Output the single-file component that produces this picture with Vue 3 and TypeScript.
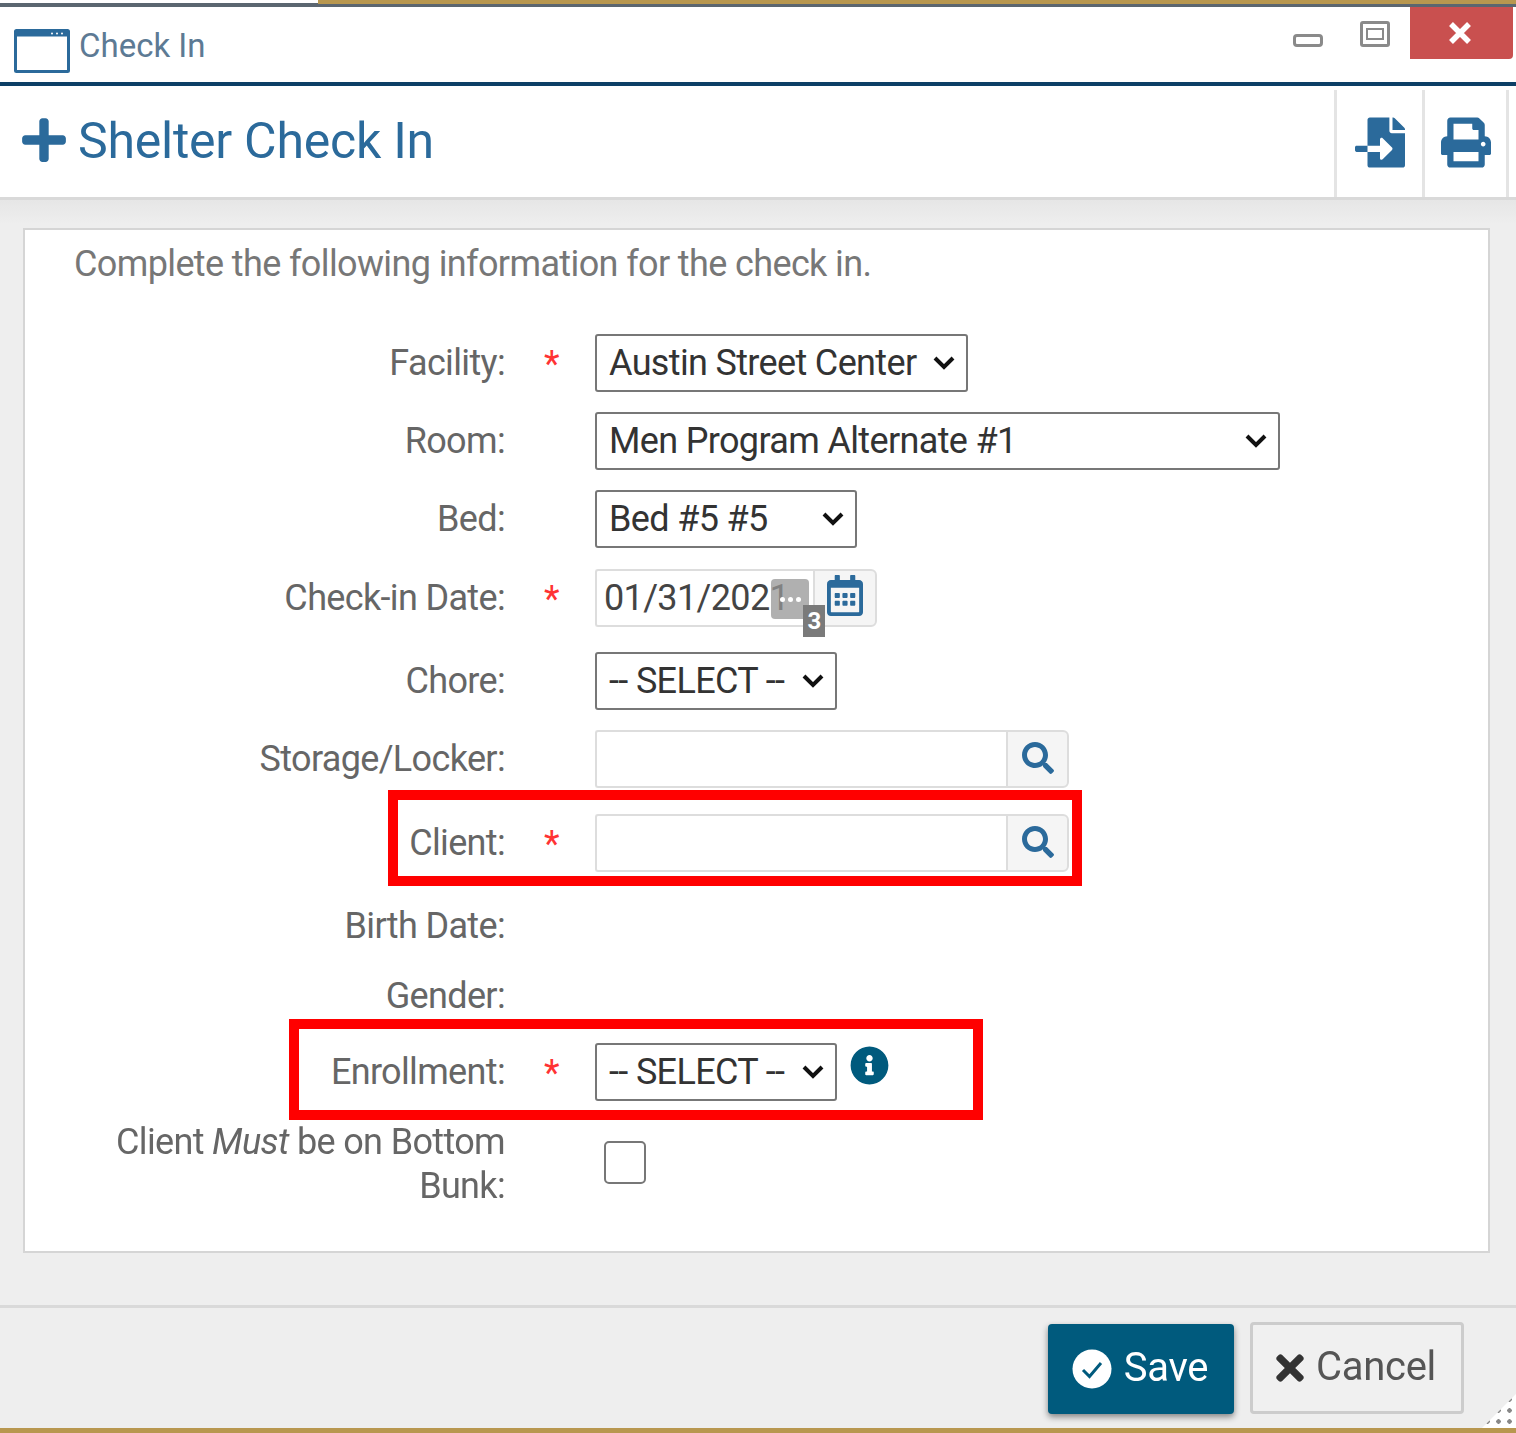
<template>
  <div class="page">
    <div class="window">
      <div class="top-strip"><span class="strip-light"></span><span class="strip-tan"></span></div>

      <div class="titlebar">
        <svg class="win-icon" viewBox="0 0 56 44">
          <rect x="1.5" y="1.5" width="53" height="41" rx="1" fill="#fff" stroke="#2b6a9b" stroke-width="3" />
          <rect x="1.5" y="1.5" width="53" height="6" fill="#2b6a9b" />
          <circle cx="38" cy="4.5" r="1" fill="#fff" />
          <circle cx="43" cy="4.5" r="1" fill="#fff" />
          <circle cx="48" cy="4.5" r="1" fill="#fff" />
        </svg>
        <span class="win-title">Check In</span>
        <span class="win-min"></span>
        <span class="win-max"><i></i></span>
        <span class="win-close">
          <svg viewBox="0 0 24 22"><path d="M3 2l18 18M21 2L3 20" fill="none" stroke="#fff" stroke-width="5.5" /></svg>
        </span>
      </div>

      <div class="header">
        <svg class="plus" viewBox="0 0 448 512"><path :d="icons.plus" /></svg>
        <h1>Shelter Check In</h1>
        <button class="tool"><svg viewBox="0 0 512 512"><path :d="icons.fileImport" /></svg></button>
        <button class="tool"><svg viewBox="0 0 512 512"><path :d="icons.print" /></svg></button>
      </div>

      <div class="body">
        <div class="panel">
          <p class="intro">Complete the following information for the check in.</p>
          <div class="form">
            <div v-for="f in fields" :key="f.label" class="row">
              <label class="label">
                <template v-if="f.key === 'bunk'">Client <em>Must</em> be on Bottom Bunk:</template>
                <template v-else>{{ f.label }}:</template>
              </label>
              <span class="star">{{ f.required ? '*' : '' }}</span>

              <div v-if="f.kind === 'select'" class="select" :style="{ width: f.width + 'px' }">
                <span>{{ f.value }}</span>
                <svg viewBox="0 0 24 16"><path d="M3 4l9 9 9-9" fill="none" stroke="#111" stroke-width="4" /></svg>
              </div>

              <div v-else-if="f.kind === 'date'" class="group date">
                <div class="input">{{ f.value }}</div>
                <div class="addon">
                  <svg class="cal" viewBox="0 0 448 512"><path :d="icons.calendar" /></svg>
                </div>
                <span class="pm-dots"><i></i><i></i><i></i></span>
                <span class="pm-count">3</span>
              </div>

              <div v-else-if="f.kind === 'lookup'" class="group lookup">
                <div class="input"></div>
                <div class="addon">
                  <svg class="search" viewBox="0 0 512 512"><path :d="icons.search" /></svg>
                </div>
              </div>

              <span v-else-if="f.kind === 'check'" class="checkbox"></span>

              <svg v-if="f.key === 'enrollment'" class="info" viewBox="0 0 512 512"><path :d="icons.info" /></svg>
            </div>
          </div>
        </div>
      </div>

      <div class="footer">
        <button class="btn save">
          <svg viewBox="0 0 40 40">
            <circle cx="20" cy="20" r="19.5" fill="#fff" />
            <path d="M11 21l6.5 6.5L29 14" fill="none" stroke="#005a7d" stroke-width="3" />
          </svg>
          Save
        </button>
        <button class="btn cancel">
          <svg viewBox="0 0 352 512"><path :d="icons.times" /></svg>
          Cancel
        </button>
        <span class="grip"></span>
      </div>

      <div class="bottom-strip"></div>
    </div>

    <div class="callout client-box"></div>
    <div class="callout enroll-box"></div>
  </div>
</template>

<script setup lang="ts">
type Kind = 'select' | 'date' | 'lookup' | 'text' | 'check';

interface Field {
  key: string;
  label: string;
  kind: Kind;
  required?: boolean;
  value?: string;
  width?: number;
}

const fields: Field[] = [
  { key: 'facility', label: 'Facility', kind: 'select', required: true, value: 'Austin Street Center', width: 373 },
  { key: 'room', label: 'Room', kind: 'select', value: 'Men Program Alternate #1', width: 685 },
  { key: 'bed', label: 'Bed', kind: 'select', value: 'Bed #5 #5', width: 262 },
  { key: 'date', label: 'Check-in Date', kind: 'date', required: true, value: '01/31/2021' },
  { key: 'chore', label: 'Chore', kind: 'select', value: '-- SELECT --', width: 242 },
  { key: 'locker', label: 'Storage/Locker', kind: 'lookup' },
  { key: 'client', label: 'Client', kind: 'lookup', required: true },
  { key: 'birth', label: 'Birth Date', kind: 'text' },
  { key: 'gender', label: 'Gender', kind: 'text' },
  { key: 'enrollment', label: 'Enrollment', kind: 'select', required: true, value: '-- SELECT --', width: 242 },
  { key: 'bunk', label: 'Client Must be on Bottom Bunk', kind: 'check' },
];

// font awesome 5 shapes
const icons = {
  plus: 'M416 208H272V64c0-17.67-14.33-32-32-32h-32c-17.67 0-32 14.33-32 32v144H32c-17.67 0-32 14.33-32 32v32c0 17.67 14.33 32 32 32h144v144c0 17.67 14.33 32 32 32h32c17.67 0 32-14.33 32-32V304h144c17.67 0 32-14.33 32-32v-32c0-17.67-14.33-32-32-32z',
  fileImport: 'M16 288c-8.8 0-16 7.2-16 16v32c0 8.8 7.2 16 16 16h112v-64zm489-183L407.1 7c-4.5-4.5-10.6-7-17-7H384v128h128v-6.1c0-6.3-2.5-12.4-7-16.9zm-153 31V0H152c-13.3 0-24 10.7-24 24v264h128v-65.2c0-14.3 17.3-21.4 27.4-11.3L379 308c6.6 6.7 6.6 17.4 0 24l-95.7 96.4c-10.1 10.1-27.4 3-27.4-11.3V352H128v136c0 13.3 10.7 24 24 24h336c13.3 0 24-10.7 24-24V160H376c-13.2 0-24-10.8-24-24z',
  print: 'M448 192V77.25c0-8.49-3.37-16.62-9.37-22.63L393.37 9.37c-6-6-14.14-9.37-22.63-9.37H96C78.33 0 64 14.33 64 32v160c-35.35 0-64 28.65-64 64v112c0 8.84 7.16 16 16 16h48v96c0 17.67 14.33 32 32 32h320c17.67 0 32-14.33 32-32v-96h48c8.84 0 16-7.16 16-16V256c0-35.35-28.65-64-64-64zm-64 256H128v-96h256v96zm0-224H128V64h192v48c0 8.84 7.16 16 16 16h48v96zm48 72c-13.25 0-24-10.75-24-24 0-13.26 10.75-24 24-24s24 10.74 24 24c0 13.25-10.75 24-24 24z',
  calendar: 'M148 288h-40c-6.6 0-12-5.4-12-12v-40c0-6.6 5.4-12 12-12h40c6.6 0 12 5.4 12 12v40c0 6.6-5.4 12-12 12zm108-12v-40c0-6.6-5.4-12-12-12h-40c-6.6 0-12 5.4-12 12v40c0 6.6 5.4 12 12 12h40c6.6 0 12-5.4 12-12zm96 0v-40c0-6.6-5.4-12-12-12h-40c-6.6 0-12 5.4-12 12v40c0 6.6 5.4 12 12 12h40c6.6 0 12-5.4 12-12zm-96 96v-40c0-6.6-5.4-12-12-12h-40c-6.6 0-12 5.4-12 12v40c0 6.6 5.4 12 12 12h40c6.6 0 12-5.4 12-12zm-96 0v-40c0-6.6-5.4-12-12-12h-40c-6.6 0-12 5.4-12 12v40c0 6.6 5.4 12 12 12h40c6.6 0 12-5.4 12-12zm192 0v-40c0-6.6-5.4-12-12-12h-40c-6.6 0-12 5.4-12 12v40c0 6.6 5.4 12 12 12h40c6.6 0 12-5.4 12-12zm96-260v352c0 26.5-21.5 48-48 48H48c-26.5 0-48-21.5-48-48V112c0-26.5 21.5-48 48-48h48V12c0-6.6 5.4-12 12-12h40c6.6 0 12 5.4 12 12v52h128V12c0-6.6 5.4-12 12-12h40c6.6 0 12 5.4 12 12v52h48c26.5 0 48 21.5 48 48zm-48 346V160H48v298c0 3.3 2.7 6 6 6h340c3.3 0 6-2.7 6-6z',
  search: 'M505 442.7L405.3 343c-4.5-4.5-10.6-7-17-7H372c27.6-35.3 44-79.7 44-128C416 93.1 322.9 0 208 0S0 93.1 0 208s93.1 208 208 208c48.3 0 92.7-16.4 128-44v16.3c0 6.4 2.5 12.5 7 17l99.7 99.7c9.4 9.4 24.6 9.4 33.9 0l28.3-28.3c9.4-9.4 9.4-24.6.1-34zM208 336c-70.7 0-128-57.2-128-128 0-70.7 57.2-128 128-128 70.7 0 128 57.2 128 128 0 70.7-57.2 128-128 128z',
  info: 'M256 8C119.043 8 8 119.083 8 256c0 136.997 111.043 248 248 248s248-111.003 248-248C504 119.083 392.957 8 256 8zm0 110c23.196 0 42 18.804 42 42s-18.804 42-42 42-42-18.804-42-42 18.804-42 42-42zm56 254c0 6.627-5.373 12-12 12h-88c-6.627 0-12-5.373-12-12v-24c0-6.627 5.373-12 12-12h12v-64h-12c-6.627 0-12-5.373-12-12v-24c0-6.627 5.373-12 12-12h64c6.627 0 12 5.373 12 12v100h12c6.627 0 12 5.373 12 12v24z',
  times: 'M242.72 256l100.07-100.07c12.28-12.28 12.28-32.19 0-44.48l-22.24-22.24c-12.28-12.28-32.19-12.28-44.48 0L176 189.28 75.93 89.21c-12.28-12.28-32.19-12.28-44.48 0L9.21 111.45c-12.28 12.28-12.28 32.19 0 44.48L109.28 256 9.21 356.07c-12.28 12.28-12.28 32.19 0 44.48l22.24 22.24c12.28 12.28 32.2 12.28 44.48 0L176 322.72l100.07 100.07c12.28 12.28 32.2 12.28 44.48 0l22.24-22.24c12.28-12.28 12.28-32.19 0-44.48L242.72 256z',
};
</script>

<style>
html, body { margin: 0; background: #fff; }
</style>

<style scoped>
.page {
  position: relative;
  width: 1516px;
  height: 1433px;
  overflow: hidden;
  font-family: Roboto, "Liberation Sans", sans-serif;
}
.window {
  display: flex;
  flex-direction: column;
  height: 100%;
  filter: blur(0.7px);
}

.top-strip { display: flex; height: 7px; background: #5b6670; }
.strip-light { width: 318px; height: 3px; background: #fff; }
.strip-tan { flex: 1; height: 4px; background: #b8974f; }

.titlebar {
  display: flex;
  align-items: flex-start;
  height: 75px;
  flex: none;
  border-bottom: 4px solid #0d3f66;
  background: #fff;
}
.win-icon { width: 56px; height: 44px; margin: 22px 0 0 14px; }
.win-title { margin: 19px 0 0 9px; font-size: 33px; color: #5d7a94; flex: 1; }
.win-min {
  width: 30px; height: 13px; margin-top: 27px;
  border: 3px solid #8a8a8a; border-radius: 4px; box-sizing: border-box;
}
.win-max {
  display: flex; align-items: center; justify-content: center;
  width: 30px; height: 26px; margin: 14px 0 0 37px;
  border: 3px solid #8a8a8a; border-radius: 3px; box-sizing: border-box;
}
.win-max i { width: 18px; height: 12px; box-sizing: border-box; border: 2px solid #8a8a8a; }
.win-close {
  display: flex; align-items: center; justify-content: center;
  width: 103px; height: 52px; margin: 0 3px 0 20px;
  padding-right: 3px; box-sizing: border-box;
  background: #c9504f; border-radius: 0 0 4px 0;
}
.win-close svg { width: 24px; height: 22px; }

.header {
  display: flex;
  align-items: stretch;
  height: 114px;
  flex: none;
  padding-right: 7px;
  box-sizing: border-box;
  background: #fff;
  border-bottom: 3px solid #d9d9d9;
}
.plus { width: 44px; height: 50px; margin: 29px 0 0 22px; fill: #2b6a9b; }
h1 {
  flex: 1;
  margin: 25px 0 0 12px;
  font-size: 50px;
  font-weight: 400;
  line-height: 60px;
  letter-spacing: -0.25px;
  color: #2b6a9b;
}
.tool {
  width: 87px;
  margin-top: 4px;
  padding: 0 0 2px;
  display: flex; align-items: center; justify-content: center;
  background: #fff;
  border: 0;
  border-left: 3px solid #e4e4e4;
}
.tool:first-of-type { width: 88px; }
.tool:last-of-type { border-right: 3px solid #e4e4e4; }
.tool svg { width: 50px; height: 53px; fill: #2b6a9b; }

.body {
  flex: 1;
  padding: 28px 26px 52px 23px;
  background: linear-gradient(#e6e6e6, #eee 24px);
  border-bottom: 3px solid #d9d9d9;
  display: flex;
}
.panel {
  flex: 1;
  background: #fff;
  border: 2px solid #d5d5d5;
  box-sizing: border-box;
}
.intro {
  margin: 12px 0 0 49px;
  font-size: 36px;
  line-height: 44px;
  letter-spacing: -0.62px;
  color: #777;
}

.form {
  display: grid;
  grid-template-rows: 78px 78px 79px 83px 78px 84px 83px 70px 76px 70px auto;
  margin-top: 48px;
  letter-spacing: -0.65px;
}
.row { display: flex; align-items: flex-start; min-height: 58px; }
.label {
  width: 400px;
  margin-left: 80px;
  flex: none;
  font-size: 36px;
  line-height: 44px;
  padding-top: 7px;
  text-align: right;
  color: #666;
}
.star {
  width: 90px;
  flex: none;
  padding: 8px 0 0 39px;
  box-sizing: border-box;
  font-size: 36px;
  line-height: 44px;
  color: #f33;
}

.select {
  display: flex;
  align-items: center;
  justify-content: space-between;
  height: 58px;
  box-sizing: border-box;
  padding: 0 10px 0 12px;
  background: #fff;
  border: 2px solid #777;
  border-radius: 3px;
  font-size: 36px;
  color: #333;
}
.select svg { width: 24px; height: 16px; margin-top: -2px; }

.group { position: relative; display: flex; height: 58px; }
.input {
  box-sizing: border-box;
  background: #fff;
  border: 2px solid #ddd;
  border-right: 0;
  border-radius: 3px 0 0 3px;
  font-size: 36px;
  line-height: 54px;
  padding-left: 7px;
  color: #444;
}
.addon {
  display: flex; align-items: center; justify-content: center;
  box-sizing: border-box;
  background: #f5f5f5;
  border: 2px solid #ddd;
  border-radius: 0 6px 6px 0;
}
.date .input { width: 218px; }
.date .addon { width: 64px; }
.lookup .input { width: 411px; }
.lookup .addon { width: 63px; }
.cal { width: 36px; height: 43px; fill: #2b6a9b; margin-top: -6px; }
.search { width: 32px; height: 32px; fill: #2b6a9b; margin-top: -2px; }

.pm-dots {
  position: absolute; left: 176px; top: 10px;
  display: flex; align-items: center; justify-content: center; gap: 3px;
  width: 38px; height: 40px;
  background: rgba(150, 150, 150, 0.75);
  border-radius: 4px;
}
.pm-dots i { width: 5px; height: 5px; border-radius: 50%; background: #fff; }
.pm-count {
  position: absolute; left: 208px; top: 36px;
  width: 22px; height: 32px;
  background: #7a7a7a;
  color: #fff; font-size: 24px; font-weight: 700; line-height: 32px; text-align: center;
}

.checkbox {
  width: 42px; height: 43px; margin: 28px 0 0 9px;
  box-sizing: border-box;
  border: 2px solid #777;
  border-radius: 5px;
}
.info { width: 39px; height: 39px; margin: 3px 0 0 13px; fill: #005a7d; }

.footer {
  display: flex;
  justify-content: flex-end;
  position: relative;
  height: 120px;
  flex: none;
  padding: 14px 52px 0 0;
  box-sizing: border-box;
  background: #eee;
}
.btn {
  display: flex; align-items: center; justify-content: center;
  height: 92px;
  box-sizing: border-box;
  padding: 0 2px 4px 0;
  border-radius: 4px;
  font-family: inherit;
  font-size: 40px;
  letter-spacing: -0.3px;
}
.btn svg { margin-top: 4px; }
.save {
  width: 186px; gap: 12px; margin-top: 2px;
  height: 90px;
  background: #005a7d;
  color: #fff;
  border: 0;
  box-shadow: 0 3px 6px rgba(0, 0, 0, 0.45);
}
.save svg { width: 40px; height: 40px; }
.cancel {
  width: 214px; gap: 12px; margin-left: 16px;
  background: #f0f0f0;
  color: #555;
  border: 3px solid #ccc;
}
.cancel svg { width: 28px; height: 40px; fill: #333; }
.grip {
  position: absolute; right: 0; bottom: 0;
  width: 34px; height: 34px;
  background: radial-gradient(#888 2px, transparent 2.5px) 0 0 / 11px 11px, #fff;
  clip-path: polygon(100% 0, 100% 100%, 0 100%);
}
.bottom-strip { height: 5px; flex: none; background: #b8974f; }

.callout {
  position: absolute;
  box-sizing: border-box;
  border: 10px solid #f00;
}
.client-box { left: 388px; top: 790px; width: 694px; height: 96px; }
.enroll-box { left: 289px; top: 1019px; width: 694px; height: 101px; }
</style>
